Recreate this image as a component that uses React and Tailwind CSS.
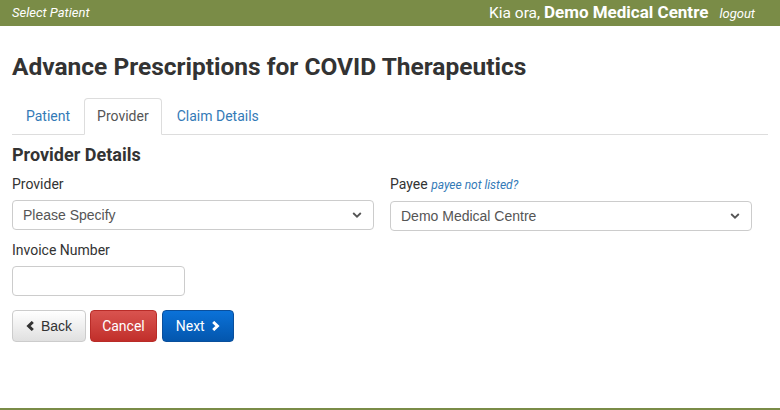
import React from 'react';

const Chevron = () => (
  <svg className="pointer-events-none absolute right-[12px] top-1/2 -translate-y-1/2" width="10" height="7" viewBox="0 0 10 7">
    <path d="M1.2 1.5 L5 5.2 L8.8 1.5" fill="none" stroke="#555" strokeWidth="1.8" />
  </svg>
);

const Select = ({ value }) => (
  <div className="relative">
    <select className="block h-[30px] w-full appearance-none rounded-[4px] border border-[#ccc] bg-white pl-[10px] text-[14px] text-[#555] font-['Liberation_Sans',Arial,sans-serif] outline-none">
      <option>{value}</option>
    </select>
    <Chevron />
  </div>
);

export default function App() {
  return (
    <div className="flex min-h-[410px] flex-col bg-white font-['Roboto',sans-serif] text-[#333]">
      <div className="flex h-[26px] items-center justify-between bg-[#7a8c47] pl-[12px] pr-[25px] text-white">
        <span className="text-[13px] italic">Select Patient</span>
        <div className="flex items-baseline gap-[11px]">
          <span className="text-[15.5px]">
            Kia ora, <b className="text-[17px] font-bold">Demo Medical Centre</b>
          </span>
          <span className="text-[13px] italic">logout</span>
        </div>
      </div>

      <div className="flex-1 px-[12px]">
        <h1 className="mt-[26px] text-[24.5px] font-bold leading-[30px] text-[#333]">Advance Prescriptions for COVID Therapeutics</h1>

        <div className="mt-[16px] flex border-b border-[#ddd] text-[14px] leading-[18px]">
          <div className="px-[14px] py-[9px] text-[#337ab7]">Patient</div>
          <div className="-mb-px rounded-t-[4px] border border-[#ddd] border-b-white bg-white px-[12px] py-[8px] text-[#555]">Provider</div>
          <div className="px-[15px] py-[9px] text-[#337ab7]">Claim Details</div>
        </div>

        <h2 className="mt-[9px] text-[18px] font-bold leading-[22px]">Provider Details</h2>

        <div className="mt-[8px] grid grid-cols-2 gap-[16px] pr-[16px]">
          <div>
            <div className="mb-[6px] text-[14px] leading-[20px]">Provider</div>
            <Select value="Please Specify" />
          </div>
          <div>
            <div className="mb-[6px] text-[14px] leading-[20px]">
              Payee <span className="text-[12px] italic text-[#337ab7]">payee not listed?</span>
            </div>
            <Select value="Demo Medical Centre" />
          </div>
        </div>

        <div className="mt-[9px] mb-[6px] text-[14px] leading-[20px]">Invoice Number</div>
        <input className="block h-[30px] w-[173px] rounded-[4px] border border-[#ccc] bg-white outline-none" />

        <div className="mt-[14px] flex gap-[4px] text-[14px]">
          <button className="flex h-[32px] items-center gap-[6px] rounded-[4px] border border-[#ccc] bg-linear-to-b from-white to-[#e0e0e0] px-[13px] text-[#333] font-['Liberation_Sans',Arial,sans-serif]">
            <svg width="9" height="10" viewBox="0 0 9 10"><path d="M6.8 1 L2.6 5 L6.8 9" fill="none" stroke="#333" strokeWidth="3" /></svg>
            Back
          </button>
          <button className="h-[32px] rounded-[4px] border border-[#b92c28] bg-linear-to-b from-[#d9534f] to-[#c12e2a] px-[11px] text-white">Cancel</button>
          <button className="ml-[1px] flex h-[32px] items-center gap-[6px] rounded-[4px] border border-[#0a4f9c] bg-linear-to-b from-[#0b72d9] to-[#0456ad] px-[13px] text-white">
            Next
            <svg width="9" height="10" viewBox="0 0 9 10"><path d="M2.2 1 L6.4 5 L2.2 9" fill="none" stroke="#fff" strokeWidth="3" /></svg>
          </button>
        </div>
      </div>

      <div className="h-[2px] bg-[#7a8c47]" />
    </div>
  );
}
